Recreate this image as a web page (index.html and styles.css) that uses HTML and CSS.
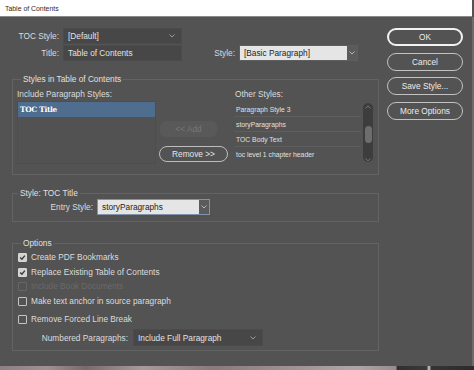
FILE: index.html
```html
<!DOCTYPE html>
<html>
<head>
<meta charset="utf-8">
<link rel="stylesheet" href="styles.css">
</head>
<body>
<div class="titlebar"><span>Table of Contents</span></div>
<div class="dialog">
  <div class="main">
    <div class="row r1">
      <span class="lbl lbl-top">TOC Style:</span>
      <div class="field dark w119">[Default]<svg class="chev" width="6" height="4" viewBox="0 0 6 4"><path d="M0.5 0.5 L3 3 L5.5 0.5" fill="none" stroke="#9a9a9a" stroke-width="1"/></svg></div>
    </div>
    <div class="row r2">
      <span class="lbl lbl-top">Title:</span>
      <div class="field dark w119">Table of Contents</div>
      <span class="lbl lbl-style">Style:</span>
      <div class="field light w119"><span class="val">[Basic Paragraph]</span><span class="dd"><svg width="6" height="4" viewBox="0 0 6 4"><path d="M0.5 0.5 L3 3 L5.5 0.5" fill="none" stroke="#b5b5b5" stroke-width="1"/></svg></span></div>
    </div>

    <fieldset class="group g1">
      <legend>Styles in Table of Contents</legend>
      <div class="g1-inner">
        <div class="col-left">
          <div class="cap">Include Paragraph Styles:</div>
          <div class="list list-left">
            <div class="item sel">TOC Title</div>
          </div>
        </div>
        <div class="col-mid">
          <div class="btn-add">&lt;&lt; Add</div>
          <div class="btn-remove">Remove &gt;&gt;</div>
        </div>
        <div class="col-right">
          <div class="cap">Other Styles:</div>
          <div class="list list-right">
            <div class="items">
              <div class="item">Paragraph Style 3</div>
              <div class="item">storyParagraphs</div>
              <div class="item">TOC Body Text</div>
              <div class="item last">toc level 1 chapter header</div>
            </div>
            <div class="scroll">
              <svg class="sarrow" width="6" height="4" viewBox="0 0 6 4"><path d="M0.5 3.5 L3 1 L5.5 3.5" fill="none" stroke="#7a7a7a" stroke-width="1"/></svg>
              <div class="thumb"></div>
              <svg class="sarrow" width="6" height="4" viewBox="0 0 6 4"><path d="M0.5 0.5 L3 3 L5.5 0.5" fill="none" stroke="#7a7a7a" stroke-width="1"/></svg>
            </div>
          </div>
        </div>
      </div>
    </fieldset>

    <fieldset class="group g2">
      <legend>Style: TOC Title</legend>
      <div class="row entry">
        <span class="lbl lbl-entry">Entry Style:</span>
        <div class="field light focus w113"><span class="val">storyParagraphs</span><span class="dd"><svg width="6" height="4" viewBox="0 0 6 4"><path d="M0.5 0.5 L3 3 L5.5 0.5" fill="none" stroke="#b5b5b5" stroke-width="1"/></svg></span></div>
      </div>
    </fieldset>

    <fieldset class="group g3">
      <legend>Options</legend>
      <div class="cb c1"><span class="box on"><svg width="7" height="7" viewBox="0 0 7 7"><path d="M1.2 3.6 L2.9 5.3 L5.9 1.6" fill="none" stroke="#3a3a3a" stroke-width="1.4"/></svg></span>Create PDF Bookmarks</div>
      <div class="cb c2"><span class="box on"><svg width="7" height="7" viewBox="0 0 7 7"><path d="M1.2 3.6 L2.9 5.3 L5.9 1.6" fill="none" stroke="#3a3a3a" stroke-width="1.4"/></svg></span>Replace Existing Table of Contents</div>
      <div class="cb c3 disabled"><span class="box"></span>Include Book Documents</div>
      <div class="cb c4"><span class="box"></span>Make text anchor in source paragraph</div>
      <div class="cb c5"><span class="box"></span>Remove Forced Line Break</div>
      <div class="row numbered">
        <span class="lbl lbl-num">Numbered Paragraphs:</span>
        <div class="field dark w130">Include Full Paragraph<svg class="chev" width="6" height="4" viewBox="0 0 6 4"><path d="M0.5 0.5 L3 3 L5.5 0.5" fill="none" stroke="#9a9a9a" stroke-width="1"/></svg></div>
      </div>
    </fieldset>
  </div>

  <div class="buttons">
    <div class="btn ok">OK</div>
    <div class="btn b-cancel">Cancel</div>
    <div class="btn b-save">Save Style...</div>
    <div class="btn b-more">More Options</div>
  </div>
  <div class="edge"></div>
</div>
<div class="desk"></div>
</body>
</html>
```

FILE: styles.css
```css
* { box-sizing: border-box; }
html, body {
  margin: 0;
  padding: 0;
  width: 474px;
  height: 370px;
  overflow: hidden;
  background: #535353;
  font-family: "Liberation Sans", Arial, sans-serif;
  font-size: 8.3px;
  color: #dcdcdc;
}
.titlebar {
  height: 17px;
  background: #ffffff;
  border-bottom: 1px solid #8a8a8a;
  padding-left: 5px;
  display: flex;
  align-items: center;
  font-size: 6.9px;
  color: #2a2a2a;
  margin-right: 2px;
}
.dialog {
  height: 349px;
  display: flex;
  padding-left: 12px;
  background: #535353;
}
.main {
  width: 367px;
  padding-top: 11px;
  display: flex;
  flex-direction: column;
}
.row {
  display: flex;
  align-items: center;
  height: 16px;
}
.r2 { margin-top: 1px; }
.lbl { text-align: right; white-space: nowrap; }
.lbl-top { width: 47px; margin-right: 4px; }
.lbl-style { margin-left: 31px; margin-right: 4px; width: 22px; }
.field {
  height: 16px;
  display: flex;
  align-items: center;
  white-space: nowrap;
}
.dark {
  background: #474747;
  border: 1px solid #4b4b4b;
  color: #e2e2e2;
  padding-left: 4px;
  justify-content: space-between;
  padding-right: 6px;
}
.light {
  background: #e5e5e5;
  border: 1px solid #5e5e5e;
  color: #1e1e1e;
}
.light .val { flex: 1; padding-left: 4px; }
.light .dd {
  width: 10px;
  height: 100%;
  background: #5b5b5b;
  display: flex;
  align-items: center;
  justify-content: center;
}
.focus { border-color: #7f93ab; }
.w119 { width: 119px; }
.w113 { width: 113px; }
.w130 { width: 130px; }

.group {
  border: 1px solid #636363;
  min-width: 0;
  margin-left: 0;
  margin-right: 0;
  margin-bottom: 0;
  padding-left: 4px;
  padding-right: 3px;
}
.group legend {
  padding: 0 2px;
  line-height: 10px;
  height: 10px;
  color: #e0e0e0;
}
.g1 { margin-top: 13px; padding-top: 5px; padding-bottom: 10px; }
.g1 legend { margin-left: 4px; }
.g1-inner { display: flex; }
.col-left { width: 139px; }
.cap { height: 10px; line-height: 10px; margin-bottom: 2px; }
.col-right .cap { padding-left: 2px; }
.list { height: 63px; border: 1px solid #4e4e4e; }
.list-left { background: #525252; }
.item {
  height: 15px;
  line-height: 15px;
  font-size: 6.8px;
  padding-left: 2px;
  white-space: nowrap;
}
.item.sel {
  background: #4e6d8f;
  color: #ffffff;
  font-weight: bold;
  font-size: 7.4px;
  font-family: "DejaVu Serif", "Liberation Serif", serif;
  letter-spacing: -0.3px;
}
.col-mid {
  width: 70px;
  margin-left: 3px;
  padding-top: 32px;
  display: flex;
  flex-direction: column;
}
.btn-add {
  width: 57px;
  height: 16px;
  margin-left: 1px;
  background: #595959;
  border-radius: 6px;
  color: #777777;
  display: flex;
  align-items: center;
  justify-content: center;
}
.btn-remove {
  width: 69px;
  height: 16px;
  margin-top: 9px;
  border: 1px solid #bdbdbd;
  border-radius: 8px;
  color: #e6e6e6;
  display: flex;
  align-items: center;
  justify-content: center;
}
.col-right { width: 142px; margin-left: 4px; }
.list-right { display: flex; border-color: #525252; }
.items { flex: 1; }
.list-right .item {
  border-bottom: 1px solid #5e5e5e;
  padding-left: 2px;
  color: #e0e0e0;
  margin-right: 2px;
}
.list-right .item.last { border-bottom: none; }
.scroll {
  width: 10px;
  margin: 1px 1px 1px 0;
  background: #3d3d3d;
  border-radius: 5px;
  display: flex;
  flex-direction: column;
  align-items: center;
  padding-top: 2px;
}
.sarrow { display: block; }
.thumb {
  width: 7px;
  height: 18px;
  margin-top: 17px;
  margin-bottom: 15px;
  background: #6d6d6d;
  border-radius: 4px;
}

.g2 { margin-top: 13px; padding-top: 1px; padding-bottom: 6px; }
.g2 legend { margin-left: 1px; }
.lbl-entry { width: 76px; margin-right: 4px; }

.g3 { margin-top: 16px; padding-top: 2px; padding-bottom: 4px; }
.g3 legend { margin-left: 4px; }
.cb {
  height: 14px;
  display: flex;
  align-items: center;
  padding-left: 1px;
  white-space: nowrap;
}
.box {
  width: 9px;
  height: 9px;
  border: 1px solid #c4c4c4;
  border-radius: 1px;
  margin-right: 4px;
  display: flex;
  align-items: center;
  justify-content: center;
}
.box.on { background: #d2d2d2; border-color: #d8d8d8; }
.c2 { margin-top: 1px; }
.c4 { margin-top: 1px; }
.c5 { margin-top: 4px; }
.disabled { color: #6a6a6a; }
.disabled .box { border-color: #666666; }
.numbered { margin-top: 3px; height: 17px; }
.numbered .field { height: 17px; }
.lbl-num { width: 111px; margin-right: 5px; }

.buttons {
  width: 76px;
  margin-left: 8px;
  padding-top: 11px;
  display: flex;
  flex-direction: column;
}
.btn {
  height: 18px;
  border: 1px solid #c2c2c2;
  border-radius: 9px;
  color: #ececec;
  display: flex;
  align-items: center;
  justify-content: center;
}
.ok { border: 2px solid #f2f2f2; }
.b-cancel { margin-top: 7px; }
.b-save { margin-top: 6px; }
.b-more { margin-top: 7px; }
.edge {
  margin-left: auto;
  width: 2px;
  background: #6c6c6c;
}
.desk {
  height: 4px;
  background: linear-gradient(to right, #8e7f82 0, #a09092 10%, #7a6a6c 18%, #a89a9b 30%, #8a7a7c 45%, #9e8f90 60%, #b0a5a6 75%, #9a8c8d 83.5%, #2f2f2f 83.8%, #3a3a3a 90%, #d0d0d0 90.5%, #343434 91%, #2c2c2c 100%);
}
```
